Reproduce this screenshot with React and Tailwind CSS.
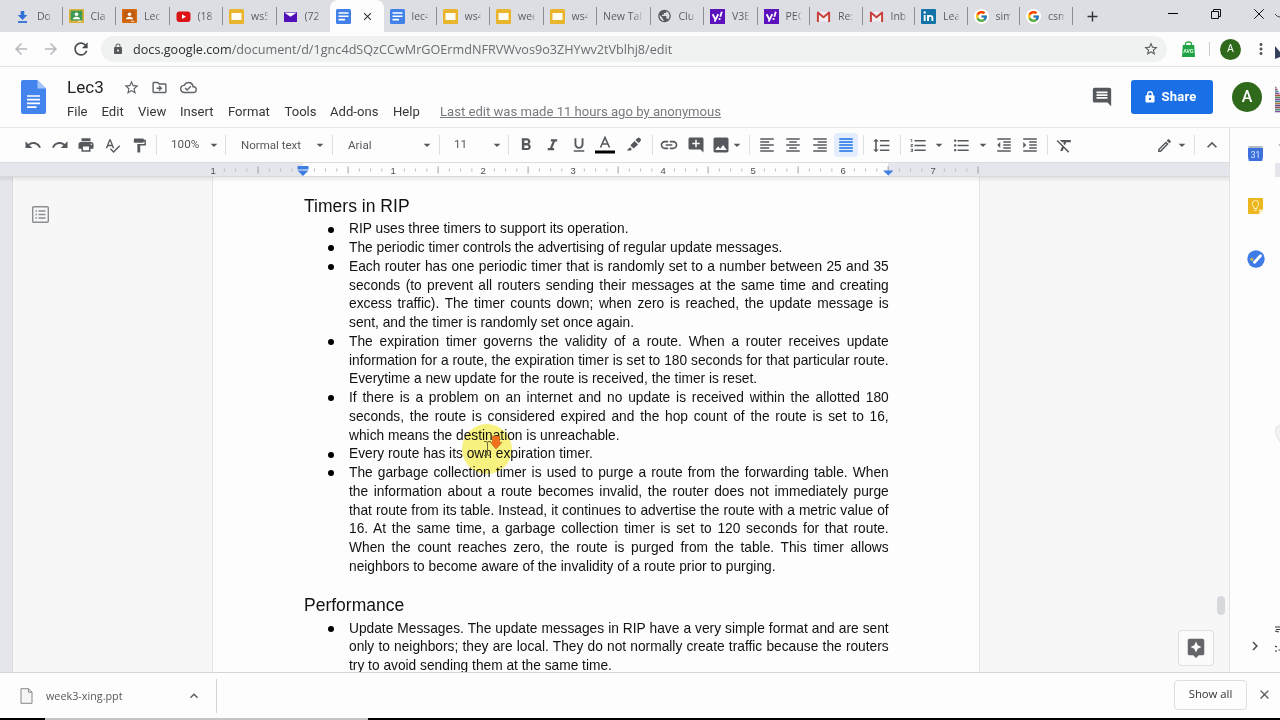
import React from "react";
import {
  MdStarBorder, MdOutlineDriveFileMove, MdOutlineCloudDone, MdComment, MdLock, MdUndo, MdRedo, MdPrint,
  MdSpellcheck, MdFormatPaint, MdFormatBold, MdFormatItalic, MdFormatUnderlined, MdInsertLink, MdAddComment, MdImage,
  MdFormatAlignLeft, MdFormatAlignCenter, MdFormatAlignRight, MdFormatAlignJustify, MdFormatLineSpacing,
  MdFormatListNumbered, MdFormatListBulleted, MdFormatIndentDecrease, MdFormatIndentIncrease, MdFormatClear,
  MdOutlineEdit, MdExpandLess, MdArrowDropDown, MdAssistant, MdChevronRight, MdClose, MdMoreVert, MdPublic,
  MdArrowBack, MdArrowForward, MdRefresh, MdAdd,
} from "react-icons/md";
import { FcGoogle } from "react-icons/fc";

const Slides = () => (
  <svg width="15" height="15" viewBox="0 0 15 15"><rect width="15" height="15" rx="1.5" fill="#e8b52c" /><rect x="2.5" y="4" width="10" height="7" fill="#fffdf2" /></svg>
);
const DocIcon = () => (
  <svg width="15" height="15" viewBox="0 0 15 15"><rect width="15" height="15" rx="1.5" fill="#4180e8" /><path d="M2.5 4h10M2.5 7.3h10M2.5 10.6h6.5" stroke="#fff" strokeWidth="1.6" /></svg>
);
const Classroom = ({ edge, fill }) => (
  <svg width="15" height="14" viewBox="0 0 15 14"><rect width="15" height="14" rx="1" fill={edge} /><rect x="1.6" y="1.6" width="11.8" height="10" fill={fill} /><circle cx="7.5" cy="5.2" r="1.8" fill="#fff" /><path d="M3.8 10.2c0-3.4 7.4-3.4 7.4 0z" fill="#fff" /><path d="M9 12.2h3.4" stroke="#fff" strokeWidth=".8" /></svg>
);
const Download = () => (
  <svg width="15" height="15" viewBox="0 0 15 15"><path d="M5.7 2h3.600v4h3L7.500 11 2.700 6h3z" fill="#2f6fd6" /><path d="M3 13h9" stroke="#2f6fd6" strokeWidth="1.800" /></svg>
);
const YouTube = () => (
  <svg width="15" height="15" viewBox="0 0 15 15"><rect x=".5" y="2.5" width="14" height="10.5" rx="3" fill="#dd1417" /><path d="M6 5.3v4.8l4-2.4z" fill="#fff" /></svg>
);
const Mail = () => (
  <svg width="15" height="15" viewBox="0 0 15 15"><path d="M1 3.2h13v9.8H1z" fill="#5211b8" /><path d="M1.6 3.8h11.8L7.5 7.8z" fill="#fff" /></svg>
);
const Yahoo = () => (
  <svg width="15" height="15" viewBox="0 0 15 15"><rect width="15" height="15" fill="#5b12bd" /><path d="M2.6 5.2l2.7 5M8.3 5.2L4.6 12.6" stroke="#fff" strokeWidth="1.8" fill="none" /><path d="M11.8 2.8l-1.5 5" stroke="#fff" strokeWidth="1.8" /><circle cx="9.6" cy="10" r="1.1" fill="#fff" /></svg>
);
const Gmail = () => (
  <svg width="15" height="15" viewBox="0 0 15 15"><path d="M2 3h11v9.5H2z" fill="#f0eef0" /><path d="M1.9 13V3.6l5.6 4.6 5.6-4.6V13" stroke="#c9403c" strokeWidth="2" fill="none" strokeLinejoin="round" /></svg>
);
const LinkedIn = () => (
  <svg width="15" height="15" viewBox="0 0 15 15"><rect width="15" height="15" rx="1" fill="#1273a8" /><path d="M3.7 6v6M7 12V6M7 9c0-2.8 4.4-2.8 4.4 0v3" stroke="#fff" strokeWidth="1.9" fill="none" /><circle cx="3.7" cy="3.5" r="1.2" fill="#fff" /></svg>
);
const Google = () => (
  <span className="flex size-[15px] items-center justify-center rounded-full bg-white"><FcGoogle size={13} /></span>
);

const tabs = [
  [<Download />, "Do", "w-[53.5px]"],
  [<Classroom edge="#dcb13a" fill="#3f9a55" />, "Cla", "w-[53.5px]"],
  [<Classroom edge="#d7690f" fill="#c05c0c" />, "Lec", "w-[53.5px]"],
  [<YouTube />, "(18", "w-[53.5px]"],
  [<Slides />, "ws5", "w-[53.5px]"],
  [<Mail />, "(72", "w-[53.5px]", true],
  "active",
  [<DocIcon />, "lec4", "w-[53px]"],
  [<Slides />, "ws4", "w-[53.5px]"],
  [<Slides />, "wee", "w-[53.5px]"],
  [<Slides />, "ws4", "w-[53.5px]"],
  [null, "New Tab", "w-[53.5px]"],
  [<MdPublic size={16} color="#56595e" />, "Clu", "w-[53.5px]"],
  [<Yahoo />, "V3B", "w-[53.5px]"],
  [<Yahoo />, "PEO", "w-[52.5px]"],
  [<Gmail />, "Re:", "w-[52.5px]"],
  [<Gmail />, "Inb", "w-[52.5px]"],
  [<LinkedIn />, "Lea", "w-[52.5px]"],
  [<Google />, "sim", "w-[52.5px]"],
  [<Google />, "csm", "w-[52.5px]"],
];

function TabStrip() {
  return (
    <div className="flex h-8 shrink-0 bg-[#dcdee3] pl-[9px]">
      {tabs.map((t, i) =>
        t === "active" ? (
          <div key={i} className="flex w-[53.5px] items-center rounded-t-lg bg-[#fdfdfd] pl-[6px]">
            <DocIcon />
            <MdClose size={13} color="#333" className="ml-[10px]" />
          </div>
        ) : (
          <div key={i} className={`flex shrink-0 items-center ${t[2]}`}>
            <div className="flex h-full min-w-0 flex-1 items-center gap-[7px] overflow-hidden pl-[6px] pr-[8px]">
              {t[0] && <span className="flex w-[15px] shrink-0 justify-center">{t[0]}</span>}
              <span className="min-w-0 overflow-hidden whitespace-nowrap bg-gradient-to-r from-[#55585d] from-75% to-[#c4c6cb] bg-clip-text font-['Open_Sans',sans-serif] text-[10.500px] leading-4 text-transparent">{t[1]}</span>
            </div>
            {!t[3] && <span className="h-[18px] w-px bg-[#8b8e94]" />}
          </div>
        )
      )}
      <div className="flex w-10 items-center justify-center"><MdAdd size={17} color="#333" /></div>
      <div className="ml-auto flex items-center gap-[33px] pb-[5px] pr-[16px]">
        <span className="h-px w-[10px] bg-black" />
        <svg width="10" height="10" viewBox="0 0 10 10" fill="none" stroke="#111"><path d="M.5 2.500h7v7h-7zM2.500 2.500v-2h7v7h-2" /></svg>
        <svg width="10" height="10" viewBox="0 0 10 10" fill="none" stroke="#111"><path d="M.3.3l9.400 9.400M9.700.3L.3 9.700" /></svg>
      </div>
    </div>
  );
}

function AddressBar() {
  return (
    <div className="flex h-[35px] shrink-0 items-center border-b border-[#dfe1e4] bg-[#fdfdfd] pl-[12px] text-[#5a5d61]">
      <MdArrowBack size={18} color="#b5b7ba" />
      <MdArrowForward size={18} color="#b5b7ba" className="ml-[12px]" />
      <MdRefresh size={20} color="#4a4d50" className="ml-[11px]" />
      <div className="ml-[10px] flex h-[26px] w-[1066px] items-center rounded-full bg-[#f0f1f1] pl-[11px]">
        <MdLock size={12} color="#55585c" />
        <span className="ml-[9px] w-[540px] whitespace-nowrap font-['Open_Sans',sans-serif] text-[12.650px] text-[#6a6d71]"><span className="text-[#2c2e31]">docs.google.com</span>/document/d/1gnc4dSQzCCwMrGOErmdNFRVWvos9o3ZHYwv2tVblhj8/edit</span>
        <MdStarBorder size={16} color="#55585c" className="ml-auto mr-[8px]" />
      </div>
      <svg width="13" height="16" viewBox="0 0 13 16" className="ml-[15px]"><path d="M3.500 4.500V3q0-2 3-2t3 2v1.500" fill="none" stroke="#2aa64a" strokeWidth="1.300" /><path d="M.8 4h11.400l.8 12H0z" fill="#1fa345" /><text x="6.500" y="11.500" textAnchor="middle" fontSize="5" fontWeight="700" fill="#e8ffe8" fontFamily="Liberation Sans">AVG</text></svg>
      <span className="ml-[14px] h-[14px] w-px bg-[#c9cbce]" />
      <span className="ml-[10px] flex size-[21px] items-center justify-center rounded-full bg-[#2f6a1c] font-[Roboto,sans-serif] text-[10.500px] text-white">A</span>
      <MdMoreVert size={18} color="#55585c" className="ml-[11px]" />
    </div>
  );
}

const menu = [["File", "w-[34.500px]"], ["Edit", "w-[36.500px]"], ["View", "w-[42px]"], ["Insert", "w-[48px]"], ["Format", "w-[56.500px]"], ["Tools", "w-[45.500px]"], ["Add-ons", "w-[63px]"], ["Help", "w-[47px]"]];

function Header() {
  return (
    <div className="flex h-[61px] shrink-0 border-b border-[#e3e5e8] bg-[#fdfdfd] font-[Roboto,sans-serif]">
      <svg width="25" height="34" viewBox="0 0 25 34" className="ml-[21px] mt-[13px] shrink-0"><path d="M2 0h14.500L25 8.500V32q0 2-2 2H2q-2 0-2-2V2q0-2 2-2z" fill="#4383ee" /><path d="M16.500 0L25 8.500h-8.500z" fill="#a4c5fa" /><path d="M6 16h13M6 19.700h13M6 23.400h13M6 27.100h9.500" stroke="#fff" strokeWidth="1.700" /></svg>
      <div className="ml-[21px] flex-1">
        <div className="mt-[8px] flex h-[24px] items-center text-[#5f6368]">
          <span className="w-[55.500px] text-[17px] leading-6 tracking-[0.1px] text-[#222]">Lec3</span>
          <MdStarBorder size={17} /><MdOutlineDriveFileMove size={17} className="ml-[11px]" /><MdOutlineCloudDone size={17} className="ml-[12px]" />
        </div>
        <div className="mt-[3px] flex h-[20px] items-center text-[13.100px] text-[#333639]">
          {menu.map(([m, w]) => <span key={m} className={w}>{m}</span>)}
          <span className="whitespace-nowrap text-[#777a7e] underline">Last edit was made 11 hours ago by anonymous</span>
        </div>
      </div>
      <div className="flex h-[60px] items-center pr-[18px]">
        <MdComment size={22} color="#55585c" />
        <div className="ml-[18px] flex h-[34px] w-[82px] items-center justify-center gap-[7px] rounded-[3px] bg-[#1a6fe6] pr-[3px] text-[13px] font-bold text-white">
          <svg width="10" height="12" viewBox="0 0 10 12"><path d="M2.700 5V3q0-2.200 2.300-2.200T7.300 3v2" fill="none" stroke="#fff" strokeWidth="1.400" /><rect x=".5" y="4.300" width="9" height="7.200" rx="1" fill="#fff" /><circle cx="5" cy="7.900" r="1.200" fill="#1a6fe6" /></svg>
          <span className="tracking-[0.2px]">Share</span>
        </div>
        <div className="ml-[19px] flex size-[30px] items-center justify-center rounded-full bg-[#2f6a1c] text-[16px] font-medium text-white">A</div>
      </div>
    </div>
  );
}

const Sep = () => <span className="h-5 w-px shrink-0 bg-[#dcdee1]" />;
const Cell = ({ w, children }) => <span className={`flex shrink-0 items-center justify-center ${w}`}>{children}</span>;
const Arrow = ({ w }) => <Cell w={w}><MdArrowDropDown size={16} className="shrink-0" /></Cell>;

function Toolbar() {
  const s = 18;
  return (
    <div className="flex h-[35px] shrink-0 items-center border-b border-[#dadce0] bg-[#fdfdfd] pl-[20px] font-[Roboto,sans-serif] text-[12px] text-[#55585c]">
      <Cell w="w-[26.500px]"><MdUndo size={s} /></Cell>
      <Cell w="w-[26.500px]"><MdRedo size={s} /></Cell>
      <Cell w="w-[26.500px]"><MdPrint size={s} /></Cell>
      <Cell w="w-[26.500px]"><MdSpellcheck size={17} /></Cell>
      <Cell w="w-[26.500px]"><MdFormatPaint size={17} /></Cell>
      <span className="w-[3.500px]" /><Sep />
      <span className="w-[46px] pl-[14px] text-[11.700px]">100%</span><Arrow w="w-[22px]" /><Sep />
      <span className="w-[82px] whitespace-nowrap pl-[15px] pt-px text-[11.500px]">Normal text</span><Arrow w="w-[24px]" /><Sep />
      <span className="w-[82px] pl-[15px] pt-px text-[11.700px]">Arial</span><Arrow w="w-[24px]" /><Sep />
      <span className="w-[46px] pl-[14px] text-[11.700px]">11</span><Arrow w="w-[22px]" /><Sep />
      <span className="w-[3.500px]" />
      <Cell w="w-[26.500px]"><MdFormatBold size={20} /></Cell>
      <Cell w="w-[26.500px]"><MdFormatItalic size={19} /></Cell>
      <Cell w="w-[26.500px]"><MdFormatUnderlined size={18} /></Cell>
      <Cell w="w-[26.500px]">
        <svg width="20" height="20" viewBox="0 0 20 20"><path d="M5.500 12.500L10 2.500l4.500 10M7 9h6" fill="none" stroke="#55585c" strokeWidth="1.600" /><path d="M0 15.500h20v3H0z" fill="#000" /></svg>
      </Cell>
      <Cell w="w-[30px]">
        <svg width="16" height="16" viewBox="0 0 16 16" fill="#55585c"><path d="M10 2.200L12.200.7q.8-.5 1.500.2l1 1q.7.8.1 1.600L13.300 5.600q-.6.6-1.200 0L9.900 3.400q-.6-.6.100-1.200zM8.600 3.900l3.500 3.500-3.900 3.700q-.6.500-1.100 0L4.900 8.900q-.5-.5 0-1.100zM3.900 10.200l2 2L4.700 13.500H.8z" /></svg>
      </Cell>
      <span className="w-[3px]" /><Sep /><span className="w-[3px]" />
      <Cell w="w-[27px]"><MdInsertLink size={20} /></Cell>
      <Cell w="w-[26px]"><MdAddComment size={18} /></Cell>
      <Cell w="w-[24px]"><MdImage size={20} /></Cell>
      <Arrow w="w-[9px]" /><span className="w-[7px]" /><Sep /><span className="w-[4px]" />
      <Cell w="w-[26.500px]"><MdFormatAlignLeft size={s} /></Cell>
      <Cell w="w-[26.500px]"><MdFormatAlignCenter size={s} /></Cell>
      <Cell w="w-[26.500px]"><MdFormatAlignRight size={s} /></Cell>
      <span className="ml-[0.500px] flex size-[24px] shrink-0 items-center justify-center rounded-sm bg-[#e3edfc] text-[#1a6fe6]"><MdFormatAlignJustify size={s} /></span>
      <span className="w-[5px]" /><Sep />
      <Cell w="w-[36px]"><MdFormatLineSpacing size={19} /></Cell><Sep />
      <Cell w="w-[36px]"><MdFormatListNumbered size={19} /></Cell><Arrow w="w-[5px]" /><span className="w-[6px]" />
      <Cell w="w-[28px]"><MdFormatListBulleted size={19} /></Cell><Arrow w="w-[14px]" />
      <Cell w="w-[28px]"><MdFormatIndentDecrease size={s} /></Cell>
      <Cell w="w-[24px]"><MdFormatIndentIncrease size={s} /></Cell>
      <span className="w-[5px]" /><Sep />
      <Cell w="w-[34px]"><MdFormatClear size={19} /></Cell>
      <span className="flex-1" />
      <MdOutlineEdit size={17} /><Arrow w="w-[17px]" /><span className="w-[4px]" /><Sep />
      <Cell w="w-[34px]"><MdExpandLess size={20} /></Cell>
    </div>
  );
}

function Ruler() {
  const ticks = Array.from({ length: 69 }, (_, i) => i);
  return (
    <div className="h-[14px] shrink-0 border-b border-[#d6d8dc] bg-[#e4e6eb]">
      <svg width="1229" height="13" viewBox="0 0 1229 13" className="block">
        <rect x="303" y="0" width="585" height="13" fill="#fdfdfd" />
        {ticks.map((i) => {
          const x = 213.1 + i * 11.25;
          if (i % 8 === 0) return i === 8 ? null : <text key={i} x={x} y="10.500" textAnchor="middle" fontSize="9.500" fill="#4c4f53" fontFamily="Liberation Sans">{Math.abs(i / 8 - 1)}</text>;
          const big = i % 4 === 0 || i === 68;
          return <path key={i} d={big ? `M${x} 3.5v7` : `M${x} 5.5v3`} stroke={big ? "#9a9da2" : "#b9bcc1"} strokeWidth="1" />;
        })}
        <path d="M297.500 3h11v3.500h-11zM297.500 7.500h11l-5.500 5.500z" fill="#3f7fe4" />
        <path d="M883 7.500h10.500l-5.200 5z" fill="#3f7fe4" />
      </svg>
    </div>
  );
}

const timers = [
  ["RIP uses three timers to support its operation."],
  ["The periodic timer controls the advertising of regular update messages."],
  ["Each router has one periodic timer that is randomly set to a number between 25 and 35", "seconds (to prevent all routers sending their messages at the same time and creating", "excess traffic). The timer counts down; when zero is reached, the update message is", "sent, and the timer is randomly set once again."],
  ["The expiration timer governs the validity of a route. When a router receives update", "information for a route, the expiration timer is set to 180 seconds for that particular route.", "Everytime a new update for the route is received, the timer is reset."],
  ["If there is a problem on an internet and no update is received within the allotted 180", "seconds, the route is considered expired and the hop count of the route is set to 16,", "which means the destination is unreachable."],
  ["Every route has its own expiration timer."],
  ["The garbage collection timer is used to purge a route from the forwarding table. When", "the information about a route becomes invalid, the router does not immediately purge", "that route from its table. Instead, it continues to advertise the route with a metric value of", "16. At the same time, a garbage collection timer is set to 120 seconds for that route.", "When the count reaches zero, the route is purged from the table. This timer allows", "neighbors to become aware of the invalidity of a route prior to purging."],
];
const performance = [
  ["Update Messages. The update messages in RIP have a very simple format and are sent", "only to neighbors; they are local. They do not normally create traffic because the routers", "try to avoid sending them at the same time."],
];

function Bullets({ items }) {
  return (
    <ul className="text-[13.750px] leading-[18.750px]">
      {items.map((lines, i) => (
        <li key={i} className="flex">
          <span className="flex h-[18.750px] w-[45px] shrink-0 items-center pl-[24px]"><span className="size-[6px] rounded-full bg-black" /></span>
          <div className="w-[539.700px]">
            {lines.map((l, j) => (
              <div key={j} className={j < lines.length - 1 ? "whitespace-nowrap [text-align-last:justify]" : "whitespace-nowrap"}>{l}</div>
            ))}
          </div>
        </li>
      ))}
    </ul>
  );
}

function Canvas() {
  return (
    <div className="relative flex min-h-0 flex-1 overflow-hidden bg-[#f6f7f6]">
      <div className="w-[13px] shrink-0 border-r border-[#d8dade] bg-[#e4e6eb]" />
      <div className="w-[199px] shrink-0 pl-[19px] pt-[29px]">
        <svg width="17" height="17" viewBox="0 0 17 17" fill="none" stroke="#8a8d92"><rect x=".7" y=".7" width="15.600" height="15.600" rx="1" strokeWidth="1.400" /><path d="M3.500 5h1.500M6.500 5h7M3.500 8.500h1.500M6.500 8.500h7M3.500 12h1.500M6.500 12h7" strokeWidth="1.300" /></svg>
      </div>
      <div className="w-[768px] shrink-0 border-x border-[#e3e5e6] bg-[#fdfdfd] pl-[91px] font-['Liberation_Sans',Arial,sans-serif] text-[#111]">
        <h2 className="mt-[16.500px] h-[26.800px] text-[17.500px] leading-[24px] tracking-[0.02px]">Timers in RIP</h2>
        <Bullets items={timers} />
        <h2 className="mt-[16.200px] h-[26.800px] text-[17.500px] leading-[24px]">Performance</h2>
        <Bullets items={performance} />
      </div>
      <span className="absolute left-[462px] top-[247px] size-[50px] rounded-full bg-[#f7ee4c]/70 mix-blend-multiply" />
      <svg className="absolute left-[482px] top-[256px]" width="24" height="26" viewBox="0 0 24 26"><path d="M2 8.500h2q1.500 0 1.500 1.500v11q0 1.500-1.500 1.500H2M9 8.500H7q-1.500 0-1.500 1.500v11q0 1.500 1.500 1.500h2" fill="none" stroke="#6b6a3c" strokeWidth="1" /><path d="M10.500 3h7v6.500H20L14 16 8.500 9.500h2z" fill="#f2701c" stroke="#b5601c" strokeWidth=".6" /></svg>
      <span className="absolute left-[1217px] top-[419px] h-[19px] w-[8px] rounded-full bg-[#d6d8dc]" />
      <div className="absolute left-[1178px] top-[453px] flex size-[36px] items-center justify-center rounded-sm border border-[#dcdee0] bg-[#fbfbfb]"><MdAssistant size={22} color="#636569" /></div>
      <div className="pointer-events-none absolute inset-x-0 top-0 h-[5px] bg-gradient-to-b from-black/8 to-transparent" />
    </div>
  );
}

function SidePanel() {
  return (
    <div className="flex w-[51px] shrink-0 flex-col items-center border-l border-[#dfe1e4] bg-[#fdfdfd] pl-[1px] pt-[18px]">
      <svg width="15" height="15" viewBox="0 0 15 15"><path d="M.5 0h14v4H.5z" fill="#b5bac2" /><path d="M0 2h15v9l-.8 4H.8L0 11z" fill="#3c71dc" /><text x="7.500" y="11.500" fontSize="8.500" textAnchor="middle" fill="#dbe7ff" fontFamily="Roboto">31</text></svg>
      <svg className="mt-[37px]" width="15" height="16" viewBox="0 0 15 16"><path d="M1 0h13q1 0 1 1v10.500L11 16H1q-1 0-1-1V1q0-1 1-1z" fill="#ecb71e" /><path d="M15 11.500L11 16v-4.500z" fill="#fbeab0" /><path d="M6 10.500V9Q4.200 8 4.200 5.800a3.300 3.300 0 0 1 6.600 0Q10.800 8 9 9v1.500zM6 12.300h3" fill="none" stroke="#fff1bd" strokeWidth="1" /></svg>
      <svg className="mt-[36px]" width="18" height="18" viewBox="0 0 18 18"><circle cx="9" cy="9" r="8.700" fill="#3d7be6" /><path d="M7.500 12.300l6-6.500" stroke="#fff" strokeWidth="2.800" strokeLinecap="round" /><circle cx="4.800" cy="9.300" r="1.600" fill="#c5b356" /></svg>
      <MdChevronRight size={18} color="#4c4f53" className="mb-[17px] mr-[1px] mt-auto" />
    </div>
  );
}

function Downloads() {
  return (
    <div className="flex h-[46px] shrink-0 items-center border-t border-[#d2d4d6] bg-[#fdfdfd] font-['Open_Sans',sans-serif] text-[#55585c]">
      <svg className="ml-[20px]" width="13" height="16" viewBox="0 0 13 16"><path d="M1 .7h7.500l3.500 3.500v11.100H1zM8.500.7v3.500H12" fill="#f6f6f6" stroke="#85888c" /></svg>
      <span className="ml-[13px] w-[140px] pt-px text-[10.800px]">week3-xing.ppt</span>
      <MdExpandLess size={16} />
      <span className="ml-[14px] h-[34px] w-px bg-[#d2d4d6]" />
      <div className="mb-[2px] ml-auto flex h-[30px] w-[73px] items-center justify-center rounded border border-[#dcdee0] text-[11.300px] text-[#333]">Show all</div>
      <MdClose size={15} className="mb-[2px] ml-[10px] mr-[8px]" />
    </div>
  );
}

const stripes = ["#6f8f6a", "#a04a7c", "#4d8f92", "#7b5aa8", "#b0503c", "#4a8a5c", "#8a4aa0", "#3f7f8c", "#b07a3c", "#5a4a90", "#9c4a5a", "#4d8f72", "#77589a"];

function EdgeWindow() {
  return (
    <svg className="pointer-events-none absolute right-0 top-0" width="5" height="720" viewBox="0 0 5 720">
      <path d="M0 14q2 3 5 3" fill="none" stroke="#444" />
      <path d="M0 46l5 6v5l-5 2z" fill="#34405e" />
      {stripes.map((c, i) => <path key={i} d={`M0 ${87.5 + i * 2}h${Math.min(5, 1.5 + i)}`} stroke={c} strokeWidth="1.6" />)}
      <path d="M0 163h5v14H0z" fill="#e4e6eb" />
      <path d="M3.500 144.500h1.500v1.500z" fill="#777" />
      <path d="M5 425q-5 2-5 6t5 11" fill="#f1f1f1" stroke="#dcdcdc" strokeWidth=".7" />
      <path d="M0 627h5M1 629.500h4M0 631l4 1M0 646l2 1M0 651h2M3.500 650h1.500" fill="none" stroke="#333" strokeWidth="1.200" />
    </svg>
  );
}

export default function App() {
  return (
    <div className="relative flex h-[720px] w-[1280px] flex-col overflow-hidden bg-[#fdfdfd]">
      <TabStrip />
      <AddressBar />
      <Header />
      <div className="flex min-h-0 flex-1">
        <div className="flex w-[1229px] shrink-0 flex-col">
          <Toolbar />
          <Ruler />
          <Canvas />
        </div>
        <SidePanel />
      </div>
      <Downloads />
      <div className="flex h-[2px] shrink-0 bg-black pl-[45px]"><span className="w-[323px] bg-[#c4c4c4]" /></div>
      <EdgeWindow />
    </div>
  );
}
